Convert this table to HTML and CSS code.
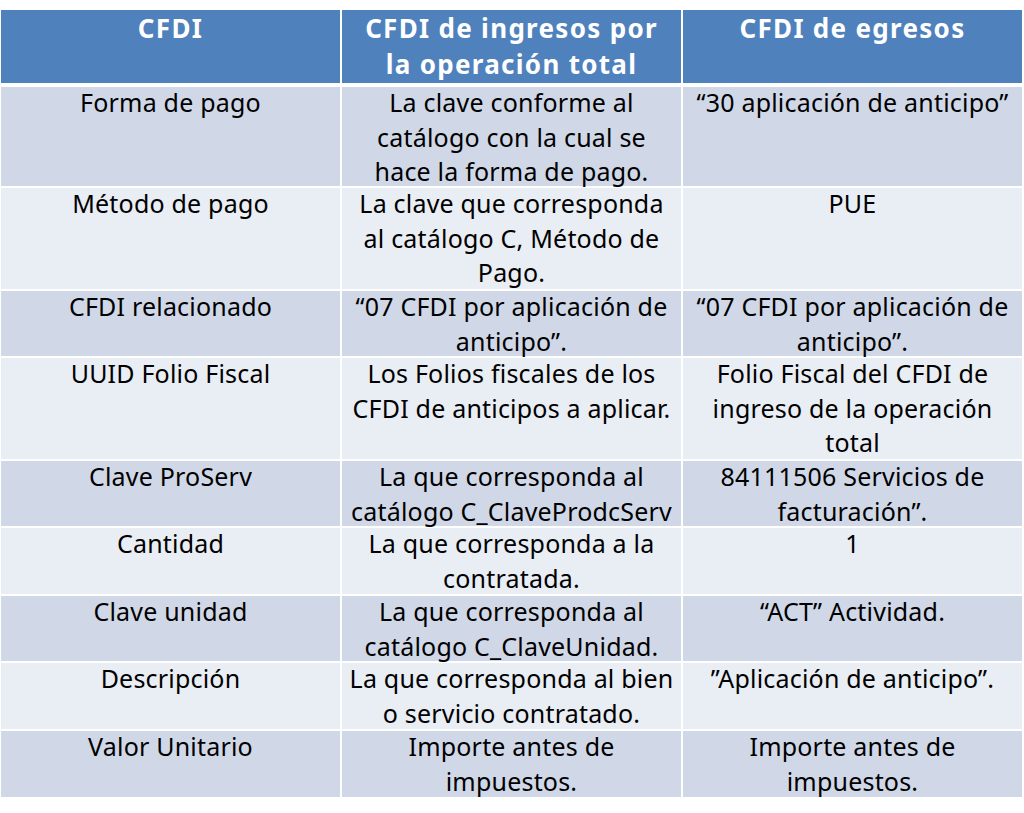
FILE: index.html
```html
<!DOCTYPE html>
<html lang="es">
<head>
<meta charset="utf-8">
<link rel="stylesheet" href="styles.css">
</head>
<body>
<div class="tabla">
  <div class="cell head">CFDI</div>
  <div class="cell head">CFDI de ingresos por<br>la operación total</div>
  <div class="cell head">CFDI de egresos</div>

  <div class="cell dark"><p>Forma de pago</p></div>
  <div class="cell dark"><p>La clave conforme al<br>catálogo con la cual se<br>hace la forma de pago.</p></div>
  <div class="cell dark"><p>“30 aplicación de anticipo”</p></div>

  <div class="cell light"><p>Método de pago</p></div>
  <div class="cell light"><p>La clave que corresponda<br>al catálogo C, Método de<br>Pago.</p></div>
  <div class="cell light"><p>PUE</p></div>

  <div class="cell dark"><p>CFDI relacionado</p></div>
  <div class="cell dark"><p>“07 CFDI por aplicación de<br>anticipo”.</p></div>
  <div class="cell dark"><p>“07 CFDI por aplicación de<br>anticipo”.</p></div>

  <div class="cell light"><p>UUID Folio Fiscal</p></div>
  <div class="cell light"><p>Los Folios fiscales de los<br>CFDI de anticipos a aplicar.</p></div>
  <div class="cell light"><p>Folio Fiscal del CFDI de<br>ingreso de la operación<br>total</p></div>

  <div class="cell dark"><p>Clave ProServ</p></div>
  <div class="cell dark"><p>La que corresponda al<br>catálogo C_ClaveProdcServ</p></div>
  <div class="cell dark"><p>84111506 Servicios de<br>facturación”.</p></div>

  <div class="cell light"><p>Cantidad</p></div>
  <div class="cell light"><p>La que corresponda a la<br>contratada.</p></div>
  <div class="cell light"><p>1</p></div>

  <div class="cell dark"><p>Clave unidad</p></div>
  <div class="cell dark"><p>La que corresponda al<br>catálogo C_ClaveUnidad.</p></div>
  <div class="cell dark"><p>“ACT” Actividad.</p></div>

  <div class="cell light"><p>Descripción</p></div>
  <div class="cell light"><p>La que corresponda al bien<br>o servicio contratado.</p></div>
  <div class="cell light"><p>”Aplicación de anticipo”.</p></div>

  <div class="cell dark"><p>Valor Unitario</p></div>
  <div class="cell dark"><p>Importe antes de<br>impuestos.</p></div>
  <div class="cell dark"><p>Importe antes de<br>impuestos.</p></div>
</div>
</body>
</html>
```
FILE: styles.css
```css
html, body {
  margin: 0;
  padding: 0;
  background: #ffffff;
}
body {
  font-family: "Noto Sans", "Open Sans", sans-serif;
  color: #000000;
}
.tabla {
  display: grid;
  grid-template-columns: 339px 339px 339px;
  grid-template-rows: 75px 99px 101px 65px 101px 65px 66px 65px 66px 66px;
  column-gap: 2px;
  row-gap: 2px;
  margin: 10px 0 0 1px;
}
.cell {
  text-align: center;
  font-size: 25px;
  line-height: 34.5px;
  letter-spacing: 0.2px;
  white-space: nowrap;
  padding: 0;
  box-sizing: border-box;
}
.cell p {
  margin: -2px 0 0 0;
}
.head {
  background: #4f81bd;
  color: #ffffff;
  font-weight: 700;
  font-size: 26px;
  line-height: 36px;
  letter-spacing: 1.3px;
  margin-bottom: 2px;
  overflow: hidden;
}
.dark {
  background: #d0d8e8;
}
.light {
  background: #e9edf4;
}
```
